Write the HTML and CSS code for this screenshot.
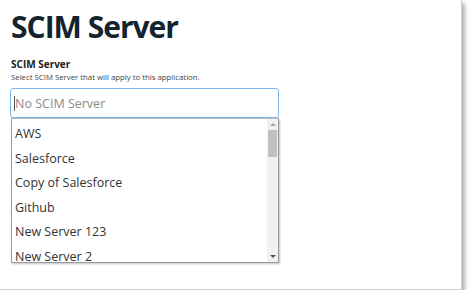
FILE: index.html
```html
<!DOCTYPE html>
<html>
<head>
<meta charset="utf-8">
<link rel="stylesheet" href="styles.css">
</head>
<body>
<div class="frame">
  <h1 class="title">SCIM Server</h1>
  <div class="label">SCIM Server</div>
  <div class="help">Select SCIM Server that will apply to this application.</div>
  <div class="input"><span class="caret"></span><span class="placeholder">No SCIM Server</span></div>
  <div class="list">
    <div class="items">
      <div class="item">AWS</div>
      <div class="item">Salesforce</div>
      <div class="item">Copy of Salesforce</div>
      <div class="item">Github</div>
      <div class="item">New Server 123</div>
      <div class="item">New Server 2</div>
    </div>
    <div class="scrollbar">
      <div class="arrow up"></div>
      <div class="track"><div class="thumb"></div></div>
      <div class="arrow down"></div>
    </div>
  </div>
</div>
</body>
</html>
```
FILE: styles.css
```css
html, body { margin: 0; padding: 0; background: #fff; }
body { font-family: "Open Sans", sans-serif; }
.frame {
  width: 462px; height: 290px; background: #fff;
  box-shadow: 3px 3px 4px rgba(0,0,0,0.3);
  border-right: 1px solid #d0d0d0; border-bottom: 1px solid #d0d0d0;
  box-sizing: border-box;
  padding: 9px 0 0 11px;
}
.title { margin: 0; font-size: 30px; font-weight: bold; color: #14242c; line-height: 36px; letter-spacing: -1px; }
.label { margin-top: 13px; font-size: 10px; font-weight: bold; color: #222; line-height: 12px; }
.help { margin-top: 2px; font-size: 7.8px; color: #444; line-height: 10px; }
.input {
  margin-top: 6px; margin-left: -1px; width: 269px; height: 30px; box-sizing: border-box;
  border: 1px solid #7db7ec; border-radius: 3px; display: flex; align-items: center; padding-left: 3px;
}
.caret { width: 1px; height: 15px; background: #555; }
.placeholder { font-size: 12.5px; color: #8a8a8a; }
.list {
  width: 268px; height: 145px; box-sizing: border-box; display: flex;
  border: 1px solid #9a9a9a; border-top: 1px solid #bbb;
  box-shadow: 1px 1px 2px rgba(0,0,0,0.25); overflow: hidden;
}
.items { flex: 1; padding-top: 3px; overflow: hidden; }
.item { font-size: 12.5px; color: #333; line-height: 24.6px; padding-left: 3px; white-space: nowrap; }
.scrollbar { width: 11px; background: #f1f1f1; display: flex; flex-direction: column; }
.arrow { height: 11px; display: flex; align-items: center; justify-content: center; }
.arrow.up::before { content: ""; border-left: 3px solid transparent; border-right: 3px solid transparent; border-bottom: 3px solid #a3a3a3; }
.arrow.down::before { content: ""; border-left: 3px solid transparent; border-right: 3px solid transparent; border-top: 3px solid #505050; }
.track { flex: 1; }
.thumb { height: 27px; background: #c1c1c1; margin: 0 1px; }
```
